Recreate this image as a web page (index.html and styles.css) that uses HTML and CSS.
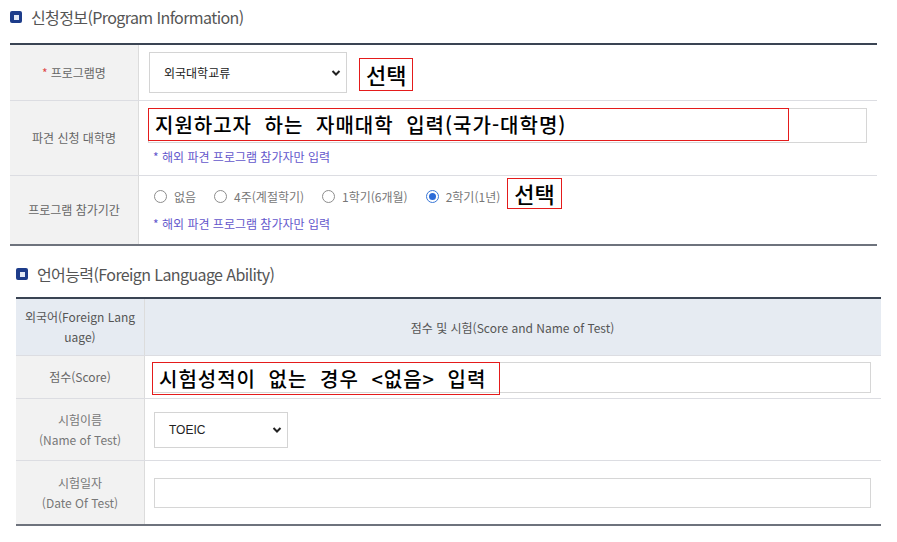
FILE: index.html
```html
<!DOCTYPE html>
<html lang="ko">
<head>
<meta charset="utf-8">
<title>신청정보</title>
<link rel="stylesheet" href="styles.css">
</head>
<body>
<section class="sec sec1">
  <h2 class="heading"><span class="ico"></span>신청정보(Program Information)</h2>
  <div class="tbl">
    <div class="row r1">
      <div class="lab"><span class="req">*</span> 프로그램명</div>
      <div class="val">
        <div class="select sel1"><span>외국대학교류</span><svg class="chev" width="10" height="8" viewBox="0 0 10 8"><path d="M1.5 2 L5 5.5 L8.5 2" fill="none" stroke="#222" stroke-width="2"/></svg></div>
        <span class="mark m1">선택</span>
      </div>
    </div>
    <div class="row r2">
      <div class="lab">파견 신청 대학명</div>
      <div class="val col">
        <div class="input in1"><span class="redbox rb1">지원하고자 하는 자매대학 입력(국가-대학명)</span></div>
        <p class="note">* 해외 파견 프로그램 참가자만 입력</p>
      </div>
    </div>
    <div class="row r3">
      <div class="lab">프로그램 참가기간</div>
      <div class="val col">
        <div class="radios">
          <span class="rad"><span class="circ"></span>없음</span>
          <span class="rad"><span class="circ"></span>4주(계절학기)</span>
          <span class="rad"><span class="circ"></span>1학기(6개월)</span>
          <span class="rad on"><span class="circ"></span>2학기(1년)</span>
          <span class="mark m2">선택</span>
        </div>
        <p class="note note2">* 해외 파견 프로그램 참가자만 입력</p>
      </div>
    </div>
  </div>
</section>
<section class="sec sec2">
  <h2 class="heading"><span class="ico"></span>언어능력(Foreign Language Ability)</h2>
  <div class="tbl tbl2">
    <div class="row h">
      <div class="lab hl">외국어(Foreign Lang<br>uage)</div>
      <div class="val hv">점수 및 시험(Score and Name of Test)</div>
    </div>
    <div class="row s">
      <div class="lab">점수(Score)</div>
      <div class="val">
        <div class="input in2"><span class="redbox rb2">시험성적이 없는 경우 &lt;없음&gt; 입력</span></div>
      </div>
    </div>
    <div class="row n">
      <div class="lab two">시험이름<br>(Name of Test)</div>
      <div class="val">
        <div class="select sel2"><span>TOEIC</span><svg class="chev" width="10" height="8" viewBox="0 0 10 8"><path d="M1.5 2 L5 5.5 L8.5 2" fill="none" stroke="#222" stroke-width="2"/></svg></div>
      </div>
    </div>
    <div class="row d">
      <div class="lab two">시험일자<br>(Date Of Test)</div>
      <div class="val">
        <div class="input in3"></div>
      </div>
    </div>
  </div>
</section>
</body>
</html>
```
FILE: styles.css
```css
* { box-sizing: border-box; }
html, body { margin: 0; padding: 0; background: #fff; }
body {
  width: 897px;
  font-family: "Noto Sans CJK KR", "Noto Sans", sans-serif;
  color: #666;
}
.sec1 { padding-left: 10px; width: 877px; }
.sec2 { padding-left: 16px; width: 881px; }

.heading {
  margin: 0;
  display: flex;
  align-items: center;
  font-weight: 400;
  font-size: 16px;
  line-height: 22px;
  color: #555;
  letter-spacing: -0.6px;
}
.sec1 .heading { padding-top: 6px; margin-bottom: 15px; }
.sec2 .heading { margin-top: 17px; margin-bottom: 12px; }
.ico {
  width: 12px; height: 12px;
  background: #1d3c8a;
  border-radius: 2px;
  margin-right: 9px;
  display: flex; align-items: center; justify-content: center;
}
.ico::after {
  content: "";
  width: 5px; height: 5px;
  background: #e3e9f6;
}

.tbl {
  border-top: 2px solid #3a4453;
  border-bottom: 2px solid #6e737d;
}
.row {
  display: grid;
  grid-template-columns: 129px 1fr;
  border-bottom: 1px solid #dcdde2;
}
.row:last-child { border-bottom: 0; }
.lab {
  background: #f2f2f2;
  border-right: 1px solid #dcdcdc;
  display: flex; align-items: center; justify-content: center;
  font-size: 12px;
  color: #666;
  text-align: center;
  line-height: 20px;
}
.req { color: #e04848; margin-right: 3px; }
.val {
  display: flex;
  align-items: center;
  padding: 0 10px;
}
.val.col { flex-direction: column; align-items: stretch; justify-content: flex-start; }

.r1 { height: 56px; }
.r1 .val { padding-left: 10px; }
.r2 { height: 75px; }
.r2 .val { padding: 7px 10px 0 9px; }
.r3 { height: 68px; }
.r3 .val { padding: 2px 10px 0 15px; }

.select {
  height: 41px;
  border: 1px solid #d4d4d4;
  background: #fff;
  display: flex; align-items: center; justify-content: space-between;
  font-size: 12px;
  color: #222;
}
.sel1 { width: 198px; padding: 0 5px 0 14px; }
.sel2 { width: 134px; height: 36px; padding: 0 5px 0 14px; font-family: "Liberation Sans", Arial, sans-serif; }
.chev { display: block; }

.mark {
  border: 1px solid #e41b1b;
  color: #000;
  font-weight: 500;
  font-size: 22px;
  line-height: 29px;
  padding: 0 6px 0 6px;
  height: 33px;
  display: flex; align-items: center;
}
.m1 { margin-left: 12px; margin-top: 3px; }
.m2 { margin-left: 7px; height: 31px; }

.input {
  border: 1px solid #d6d6d6;
  background: #fff;
  display: flex;
  align-items: stretch;
}
.in1 { height: 35px; }
.in2 { height: 31px; flex: 1; margin-left: -2px; overflow: visible; }
.in3 { height: 30px; flex: 1; }
.tbl2 .val { padding: 0 10px 0 9px; }

.redbox {
  border: 1px solid #e41b1b;
  color: #000;
  font-weight: 500;
  font-size: 20px;
  letter-spacing: 1px;
  word-spacing: 6px;
  display: flex; align-items: center;
  white-space: nowrap;
  margin: -1px 0 -1px -1px;
}
.rb1 { width: 641px; padding-left: 6px; height: 33px; }
.rb2 { width: 348px; padding-left: 6px; height: 33px; margin-top: -1px; }

.note {
  margin: 5px 0 0 5px;
  font-size: 12px;
  line-height: 18px;
  color: #6357cc;
}
.note2 { margin: 6px 0 0 -1px; }

.radios {
  display: flex;
  align-items: center;
  height: 31px;
}
.rad {
  display: flex; align-items: center;
  font-size: 12px;
  color: #777;
  margin-top: 5px;
  margin-right: 18px;
}
.rad.on { margin-right: 0; }
.circ {
  width: 13px; height: 13px;
  border: 1px solid #8d8d8d;
  border-radius: 50%;
  background: #fff;
  margin-right: 7px;
  display: flex; align-items: center; justify-content: center;
}
.on .circ { border-color: #3977d6; }
.on .circ::after {
  content: "";
  width: 7px; height: 7px;
  border-radius: 50%;
  background: #2b6bd8;
}

.h { height: 57px; }
.hl { background: #e6ebf2; color: #555; }
.hv {
  background: #e6ebf2;
  justify-content: center;
  font-size: 12px;
  color: #555;
  padding-right: 60px;
}
.s { height: 43px; }
.n { height: 62px; }
.d { height: 63px; }
.two { color: #777; }
```
